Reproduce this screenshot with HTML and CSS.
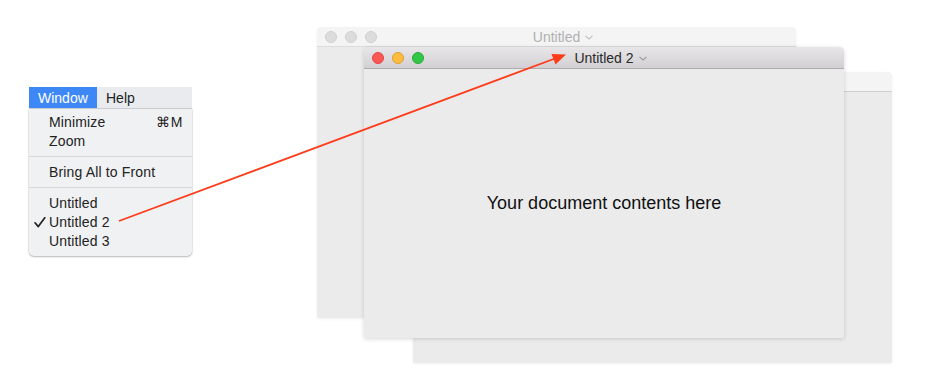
FILE: index.html
```html
<!DOCTYPE html>
<html>
<head>
<meta charset="utf-8">
<link rel="stylesheet" href="styles.css">
</head>
<body>
<div class="desk">
  <div class="menu">
    <div class="menubar">
      <span class="mb-item active">Window</span>
      <span class="mb-item">Help</span>
    </div>
    <div class="dropdown">
      <div class="item"><span>Minimize</span><span class="key">⌘M</span></div>
      <div class="item"><span>Zoom</span></div>
      <div class="sep"></div>
      <div class="item"><span>Bring All to Front</span></div>
      <div class="sep"></div>
      <div class="item"><span>Untitled</span></div>
      <div class="item">
        <svg class="check" width="12" height="11" viewBox="0 0 12 11"><path d="M1 5.8 L4.3 9.6 L10.8 0.8" fill="none" stroke="#222" stroke-width="1.7" stroke-linejoin="round" stroke-linecap="round"/></svg>
        <span>Untitled 2</span>
      </div>
      <div class="item"><span>Untitled 3</span></div>
    </div>
  </div>

  <div class="win w1">
    <div class="titlebar inactive">
      <div class="lights">
        <span class="light grey"></span><span class="light grey"></span><span class="light grey"></span>
      </div>
      <div class="title">Untitled<span class="chev">
        <svg width="8" height="5" viewBox="0 0 8 5"><path d="M0.5 0.8 L4 4 L7.5 0.8" fill="none" stroke="currentColor" stroke-width="1.1"/></svg>
      </span></div>
    </div>
    <div class="content"></div>
  </div>

  <div class="win w3">
    <div class="titlebar inactive"></div>
    <div class="content"></div>
  </div>

  <div class="win w2">
    <div class="titlebar active">
      <div class="lights">
        <span class="light red"></span><span class="light yellow"></span><span class="light green"></span>
      </div>
      <div class="title">Untitled 2<span class="chev">
        <svg width="8" height="5" viewBox="0 0 8 5"><path d="M0.5 0.8 L4 4 L7.5 0.8" fill="none" stroke="currentColor" stroke-width="1.1"/></svg>
      </span></div>
    </div>
    <div class="content doc">Your document contents here</div>
  </div>

  <svg class="arrow" width="930" height="388" viewBox="0 0 930 388">
    <line x1="119" y1="221" x2="555" y2="58.5" stroke="#fc3d1c" stroke-width="1.8"/>
    <polygon points="566,54.5 551.5,54 555.5,64.5" fill="#fc3d1c"/>
  </svg>
</div>
</body>
</html>
```

FILE: styles.css
```css
html, body {
  margin: 0;
  padding: 0;
  background: #ffffff;
}

.desk {
  position: relative;
  width: 930px;
  height: 388px;
  overflow: hidden;
  font-family: "Liberation Sans", Arial, sans-serif;
  color: #222;
}

/* ---------- menu ---------- */
.menu {
  position: absolute;
  left: 29px;
  top: 87px;
  width: 163px;
  z-index: 1;
}

.menubar {
  display: flex;
  height: 22px;
  background: #e9ebef;
  border-bottom: 1px solid #d6d7da;
  box-sizing: border-box;
  font-size: 14px;
}

.mb-item {
  display: flex;
  align-items: center;
  padding: 0 9px;
  color: #222;
}

.mb-item.active {
  background: #3d88f6;
  color: #fff;
  width: 50px;
}

.dropdown {
  background: #f0f1f3;
  padding: 3px 0 6px;
  border-radius: 0 0 5px 5px;
  box-shadow: 0 1px 2px rgba(0, 0, 0, 0.25), 0 0 0 0.5px rgba(0, 0, 0, 0.08);
  font-size: 14px;
  letter-spacing: 0.15px;
}

.item {
  position: relative;
  display: flex;
  justify-content: space-between;
  align-items: center;
  height: 19px;
  padding: 0 9px 0 20px;
  color: #222;
}

.key {
  letter-spacing: 0.5px;
}

.check {
  position: absolute;
  left: 5px;
  top: 5px;
}

.sep {
  height: 1px;
  background: #d8d8da;
  margin: 6px 0 5px;
}

/* ---------- windows ---------- */
.win {
  position: absolute;
  width: 480px;
  height: 291px;
  background: #ebebeb;
  border-radius: 5px 5px 2px 2px;
  display: flex;
  flex-direction: column;
  overflow: hidden;
}

.w1 {
  left: 317px;
  top: 27px;
  width: 479px;
  box-shadow: 0 1px 3px rgba(0, 0, 0, 0.06);
}

.w3 {
  left: 413px;
  top: 72px;
  width: 479px;
  box-shadow: 0 1px 3px rgba(0, 0, 0, 0.06);
}

.w2 {
  left: 364px;
  top: 47px;
  width: 480px;
  box-shadow: 0 1px 4px rgba(0, 0, 0, 0.16);
}

.titlebar {
  position: relative;
  height: 22px;
  flex: none;
  display: flex;
  align-items: center;
  justify-content: center;
  box-sizing: border-box;
}

.titlebar.inactive {
  background: #f4f4f4;
  border-bottom: 1px solid #dcdcdc;
  height: 20px;
}

.w3 .titlebar.inactive {
  border-bottom-color: #cfcfcf;
}

.titlebar.active {
  background: linear-gradient(#e8e6e8, #d2d0d2);
  border-bottom: 1px solid #adadad;
}

.lights {
  position: absolute;
  left: 8px;
  top: 0;
  bottom: 0;
  display: flex;
  align-items: center;
  gap: 8px;
}

.light {
  width: 12px;
  height: 12px;
  border-radius: 50%;
  box-sizing: border-box;
}

.light.grey { background: #dcdcdc; border: 0.5px solid #d0d0d0; }
.light.red { background: #fc5753; border: 0.5px solid #df4744; }
.light.yellow { background: #fdbc40; border: 0.5px solid #de9f34; }
.light.green { background: #33c748; border: 0.5px solid #27aa35; }

.title {
  position: relative;
  font-size: 14px;
  color: #2a2a2a;
}

.inactive .title {
  color: #b0b0b0;
}

.chev {
  position: absolute;
  left: 100%;
  top: 0;
  bottom: 0;
  margin-left: 5px;
  display: flex;
  align-items: center;
  color: #9a9a9a;
  padding-top: 1px;
}

.inactive .chev {
  color: #c0c0c0;
}

.content {
  flex: 1;
}

.doc {
  display: flex;
  align-items: center;
  justify-content: center;
  font-size: 18px;
  color: #111;
  padding-bottom: 1px;
}

.arrow {
  position: absolute;
  left: 0;
  top: 0;
  z-index: 2;
  pointer-events: none;
}
```
